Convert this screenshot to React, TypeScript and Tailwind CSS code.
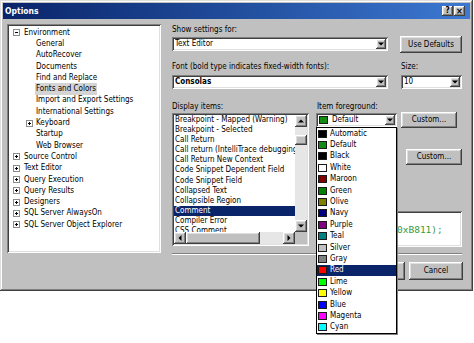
import type { ReactNode } from "react"

const raised =
  "bg-[#c0c0c0] shadow-[inset_-1px_-1px_#404040,inset_1px_1px_#ffffff,inset_-2px_-2px_#808080,inset_2px_2px_#dfdfdf]"
const sunken =
  "shadow-[inset_1px_1px_#808080,inset_-1px_-1px_#ffffff,inset_2px_2px_#404040,inset_-2px_-2px_#dfdfdf]"

type Dir = "up" | "down" | "left" | "right"

function Arrow({ dir }: { dir: Dir }) {
  const vertical = dir === "up" || dir === "down"
  const points = {
    up: "0,3.5 6,3.5 3,0.5",
    down: "0,0.5 6,0.5 3,3.5",
    left: "3.5,0 3.5,6 0.5,3",
    right: "0.5,0 0.5,6 3.5,3",
  }[dir]
  return (
    <svg width={vertical ? 6 : 4} height={vertical ? 4 : 6} viewBox={vertical ? "0 0 6 4" : "0 0 4 6"}>
      <polygon points={points} fill="#000" />
    </svg>
  )
}

function ScrollButton({ dir }: { dir: Dir }) {
  return (
    <div className={`flex h-[12px] w-[12px] shrink-0 items-center justify-center ${raised}`}>
      <Arrow dir={dir} />
    </div>
  )
}

function Combo({ className, children }: { className: string; children: ReactNode }) {
  return (
    <div className={`flex h-[14px] items-center bg-white pl-[3px] pr-[2px] ${sunken} ${className}`}>
      <div className="flex min-w-0 flex-1 items-center gap-[4px] overflow-hidden whitespace-nowrap">{children}</div>
      <div className={`flex h-[10px] w-[10px] shrink-0 items-center justify-center ${raised}`}>
        <Arrow dir="down" />
      </div>
    </div>
  )
}

function Button({ className, children }: { className: string; children: ReactNode }) {
  return <div className={`flex items-center justify-center ${raised} ${className}`}>{children}</div>
}

function Expander({ open }: { open: boolean }) {
  return (
    <svg width="7" height="7" viewBox="0 0 7 7" className="shrink-0">
      <rect x="0.5" y="0.5" width="6" height="6" fill="#fff" stroke="#8c8c8c" />
      <line x1="2" y1="3.5" x2="5" y2="3.5" stroke="#000" />
      {!open && <line x1="3.5" y1="2" x2="3.5" y2="5" stroke="#000" />}
    </svg>
  )
}

const treeItems: { label: string; level: number; exp?: "open" | "closed"; selected?: boolean }[] = [
  { label: "Environment", level: 0, exp: "open" },
  { label: "General", level: 1 },
  { label: "AutoRecover", level: 1 },
  { label: "Documents", level: 1 },
  { label: "Find and Replace", level: 1 },
  { label: "Fonts and Colors", level: 1, selected: true },
  { label: "Import and Export Settings", level: 1 },
  { label: "International Settings", level: 1 },
  { label: "Keyboard", level: 1, exp: "closed" },
  { label: "Startup", level: 1 },
  { label: "Web Browser", level: 1 },
  { label: "Source Control", level: 0, exp: "closed" },
  { label: "Text Editor", level: 0, exp: "closed" },
  { label: "Query Execution", level: 0, exp: "closed" },
  { label: "Query Results", level: 0, exp: "closed" },
  { label: "Designers", level: 0, exp: "closed" },
  { label: "SQL Server AlwaysOn", level: 0, exp: "closed" },
  { label: "SQL Server Object Explorer", level: 0, exp: "closed" },
]

function Tree() {
  return (
    <div className={`h-[229px] w-[154px] shrink-0 bg-white p-[2px] pt-[3px] ${sunken}`}>
      {treeItems.map((item) => (
        <div
          key={item.label}
          className={`flex h-[11.3px] items-center whitespace-nowrap ${item.level === 0 ? "pl-[4px]" : "pl-[17px]"}`}
        >
          <div className={`flex shrink-0 items-center ${item.level === 0 ? "w-[11px]" : "w-[10px]"}`}>
            {item.exp && <Expander open={item.exp === "open"} />}
          </div>
          <span className={item.selected ? "-ml-[1px] bg-[#d4d4d4] px-[1px]" : ""}>{item.label}</span>
        </div>
      ))}
    </div>
  )
}

const displayItems = [
  "Breakpoint - Mapped (Warning)",
  "Breakpoint - Selected",
  "Call Return",
  "Call return (IntelliTrace debugging)",
  "Call Return New Context",
  "Code Snippet Dependent Field",
  "Code Snippet Field",
  "Collapsed Text",
  "Collapsible Region",
  "Comment",
  "Compiler Error",
  "CSS Comment",
]

function DisplayList() {
  return (
    <div className={`mt-[1px] flex h-[133px] w-[137px] flex-col bg-white p-[2px] ${sunken}`}>
      <div className="flex min-h-0 flex-1">
        <div className="min-w-0 flex-1 overflow-hidden">
          {displayItems.map((label) => (
            <div
              key={label}
              className={`h-[10.1px] overflow-hidden whitespace-nowrap pl-[1px] leading-[10.1px] ${
                label === "Comment" ? "bg-[#0a246a] text-white" : ""
              }`}
            >
              {label}
            </div>
          ))}
        </div>
        <div className="flex w-[12px] shrink-0 flex-col">
          <ScrollButton dir="up" />
          <div className="h-[8px] bg-[#e6e6e6]" />
          <div className={`h-[10px] ${raised}`} />
          <div className="flex-1 bg-[#e6e6e6]" />
          <ScrollButton dir="down" />
        </div>
      </div>
      <div className="flex h-[12px] shrink-0">
        <ScrollButton dir="left" />
        <div className={`w-[74px] ${raised}`} />
        <div className="flex-1 bg-[#e6e6e6]" />
        <ScrollButton dir="right" />
        <div className="w-[12px] bg-[#c0c0c0]" />
      </div>
    </div>
  )
}

const colors: [string, string][] = [
  ["Automatic", "#000000"],
  ["Default", "#138a13"],
  ["Black", "#000000"],
  ["White", "#ffffff"],
  ["Maroon", "#800000"],
  ["Green", "#008000"],
  ["Olive", "#808000"],
  ["Navy", "#000080"],
  ["Purple", "#800080"],
  ["Teal", "#008080"],
  ["Silver", "#c0c0c0"],
  ["Gray", "#808080"],
  ["Red", "#ff0000"],
  ["Lime", "#00ff00"],
  ["Yellow", "#ffff00"],
  ["Blue", "#0000ff"],
  ["Magenta", "#ff00ff"],
  ["Cyan", "#00ffff"],
]

function Swatch({ color }: { color: string }) {
  return <span className="h-[8px] w-[9px] shrink-0 border border-[#1a1a1a]" style={{ backgroundColor: color }} />
}

function ColorDropdown() {
  return (
    <div className="absolute left-[316px] top-[127px] w-[81px] border border-black bg-white shadow-[1px_1px_0_#808080]">
      {colors.map(([name, color]) => (
        <div
          key={name}
          className={`flex h-[11.4px] items-center gap-[3px] pl-[1px] ${name === "Red" ? "bg-[#0a246a] text-white" : ""}`}
        >
          <Swatch color={color} />
          <span>{name}</span>
        </div>
      ))}
    </div>
  )
}

function TitleBar() {
  return (
    <div className="flex h-[16px] shrink-0 items-center bg-gradient-to-r from-[#0a246a] to-[#3d79d2] pl-[2px] pr-[5px]">
      <span className="flex-1 text-[8.5px] font-bold text-white">Options</span>
      <div className="flex gap-[1px]">
        <Button className="h-[10px] w-[11px] text-[8px] font-bold leading-none">?</Button>
        <Button className="h-[10px] w-[11px] text-[9px] font-bold leading-none">×</Button>
      </div>
    </div>
  )
}

export default function App() {
  return (
    <div className="h-[343px] w-[474px] overflow-hidden bg-white font-['DejaVu_Sans_Condensed','DejaVu_Sans',sans-serif] text-[8px] text-black">
      <div className="relative flex h-[291px] w-[473px] flex-col bg-[#c0c0c0] p-[3px] shadow-[inset_-1px_-1px_#404040,inset_1px_1px_#dfdfdf,inset_-2px_-2px_#808080,inset_2px_2px_#ffffff]">
        <TitleBar />
        <div className="flex flex-1 pl-[4px] pt-[5px]">
          <Tree />
          <div className="ml-[11px] flex w-[291px] flex-col">
            <div className="flex gap-[12px]">
              <div className="flex w-[216px] flex-col">
                <div className="h-[11px] leading-[11px]">Show settings for:</div>
                <Combo className="mt-[2px] w-full">Text Editor</Combo>
                <div className="mt-[10px] h-[11px] leading-[11px]">Font (bold type indicates fixed-width fonts):</div>
                <Combo className="mt-[3px] w-full">
                  <span className="font-bold">Consolas</span>
                </Combo>
              </div>
              <div className="flex w-[62px] flex-col">
                <Button className="mt-[12px] h-[17px] w-[62px]">Use Defaults</Button>
                <div className="mt-[8px] h-[11px] pl-[1px] leading-[11px]">Size:</div>
                <Combo className="ml-[1px] mt-[3px] w-[61px]">10</Combo>
              </div>
            </div>

            <div className="mt-[12px] flex">
              <div className="flex w-[137px] flex-col">
                <div className="h-[11px] leading-[11px]">Display items:</div>
                <DisplayList />
              </div>
              <div className="ml-[7px] flex w-[146px] flex-col">
                <div className="h-[11px] pl-[1px] leading-[11px]">Item foreground:</div>
                <div className="flex h-[16px] items-center">
                  <Combo className="w-[81px] pl-[2px]">
                    <Swatch color="#138a13" />
                    <span>Default</span>
                  </Combo>
                  <Button className="ml-[4px] h-[16px] w-[56px]">Custom...</Button>
                </div>
                {/* background picker row sits under the open list */}
                <div className="mt-[21px] flex h-[16px] items-center justify-end">
                  <Button className="h-[16px] w-[56px]">Custom...</Button>
                </div>
                <div className={`mt-[46px] h-[36px] w-[146px] bg-white pl-[81px] pt-[13px] ${sunken}`}>
                  <span className="font-['DejaVu_Sans_Mono',monospace] text-[9.5px] leading-[12px] text-[#3a993a]">
                    0xB811);
                  </span>
                </div>
              </div>
            </div>

            <div className="mt-[6px] h-[2px] w-[290px] border-t border-b border-t-[#808080] border-b-white" />

            <div className="mt-[7px] flex justify-end gap-[4px]">
              <Button className="h-[18px] w-[54px]">OK</Button>
              <Button className="h-[18px] w-[54px]">Cancel</Button>
            </div>
          </div>
        </div>
        <ColorDropdown />
      </div>
    </div>
  )
}
